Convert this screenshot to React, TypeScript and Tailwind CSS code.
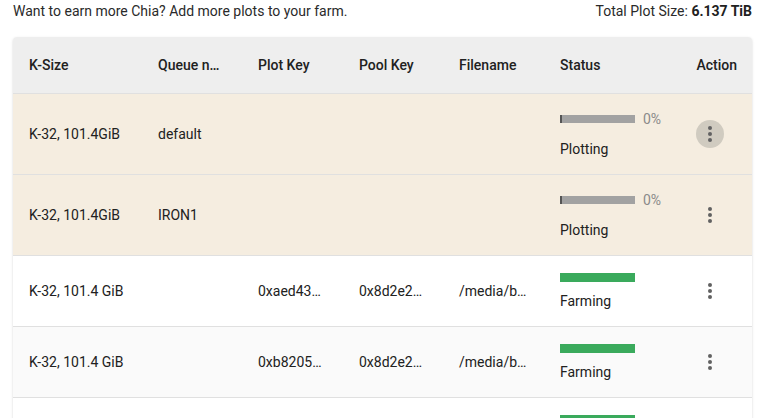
import { Fragment } from "react";

// ─── Data ─────────────────────────────────────────────────────────────────────

type Row = {
  size?: string;
  queue?: string;
  plotKey?: string;
  poolKey?: string;
  filename?: string;
  state: "plotting" | "farming";
  hover?: boolean;
  partial?: boolean;
};

const ROWS: Row[] = [
  { size: "K-32, 101.4GiB", queue: "default", state: "plotting", hover: true },
  { size: "K-32, 101.4GiB", queue: "IRON1", state: "plotting" },
  { size: "K-32, 101.4 GiB", plotKey: "0xaed43…", poolKey: "0x8d2e2…", filename: "/media/b…", state: "farming" },
  { size: "K-32, 101.4 GiB", plotKey: "0xb8205…", poolKey: "0x8d2e2…", filename: "/media/b…", state: "farming" },
  // last row is cut by the window, only its bar peeks in
  { state: "farming", partial: true },
];

const COLS = ["w-[129px]", "w-[100px]", "w-[101px]", "w-[100px]", "w-[101px]", "w-[136px]"];

// ─── Kebab ────────────────────────────────────────────────────────────────────

function Kebab({ hover }: { hover?: boolean }) {
  return (
    <div
      className={
        "flex h-7 w-7 items-center justify-center rounded-full " +
        (hover ? "bg-[#d0cbc0]" : "")
      }
    >
      <svg width="24" height="24" viewBox="0 0 24 24" fill="#616161">
        <circle cx="12" cy="6" r="2" />
        <circle cx="12" cy="12" r="2" />
        <circle cx="12" cy="18" r="2" />
      </svg>
    </div>
  );
}

// ─── Status cell ──────────────────────────────────────────────────────────────

function Status({ state, partial }: { state: Row["state"]; partial?: boolean }) {
  if (state === "plotting") {
    return (
      <div className="flex flex-col pt-[1px]">
        <div className="flex items-center gap-2">
          <div className="h-2 w-[75px] border-l-2 border-[#555] bg-[#a2a2a2]" />
          <span className="text-[14px] leading-4 text-[#8a8a8a]">0%</span>
        </div>
        <span className="mt-[12px] leading-5">Plotting</span>
      </div>
    );
  }
  return (
    <div className="flex flex-col pt-[1px]">
      <div className="h-[9px] w-[75px] bg-[#3aaa5c]" />
      {partial ? <div className="mt-[9px] h-5" /> : <span className="mt-[9px] leading-5">Farming</span>}
    </div>
  );
}

// ─── App ──────────────────────────────────────────────────────────────────────

export default function App() {
  return (
    <div
      className="h-[418px] w-[765px] overflow-hidden bg-white px-[13px] pt-[1px] text-[14px] text-[#212121]"
      style={{ fontFamily: "Roboto, 'Liberation Sans', sans-serif" }}
    >
      <div className="flex h-5 items-center justify-between leading-5 text-[#2a2a2a]">
        <span>Want to earn more Chia? Add more plots to your farm.</span>
        <span>
          Total Plot Size: <span className="font-bold text-[#212121]">6.137 TiB</span>
        </span>
      </div>

      <div className="mt-4 overflow-hidden rounded-[4px] bg-white shadow-[0_2px_1px_-1px_rgba(0,0,0,0.2),0_1px_1px_0_rgba(0,0,0,0.14),0_1px_3px_0_rgba(0,0,0,0.12)]">
        {/* Header */}
        <div className="flex h-[57px] items-center border-b border-[#e0e0e0] bg-[#eeeeee] font-medium">
          {["K-Size", "Queue n…", "Plot Key", "Pool Key", "Filename", "Status"].map((h, i) => (
            <div key={h} className={COLS[i] + " shrink-0 pl-4"}>
              {h}
            </div>
          ))}
          <div className="flex-1 pr-[15px] text-right">Action</div>
        </div>

        {/* Body */}
        {ROWS.map((r, idx) => {
          const plotting = r.state === "plotting";
          const bg = plotting ? "bg-[#f5ede0]" : idx % 2 === 1 ? "bg-[#fafafa]" : "bg-white";
          const cells = [r.size, r.queue, r.plotKey, r.poolKey, r.filename];
          return (
            <div
              key={idx}
              className={
                "flex items-center border-b border-[#e0e0e0] " +
                bg +
                (plotting ? " h-[81px]" : " h-[71px]")
              }
            >
              {cells.map((c, i) => (
                <Fragment key={i}>
                  <div className={COLS[i] + " shrink-0 pl-4"}>{c}</div>
                </Fragment>
              ))}
              <div className={COLS[5] + " shrink-0 pl-4"}>
                <Status state={r.state} partial={r.partial} />
              </div>
              <div className="flex flex-1 pl-4">{!r.partial && <Kebab hover={r.hover} />}</div>
            </div>
          );
        })}
      </div>
    </div>
  );
}
